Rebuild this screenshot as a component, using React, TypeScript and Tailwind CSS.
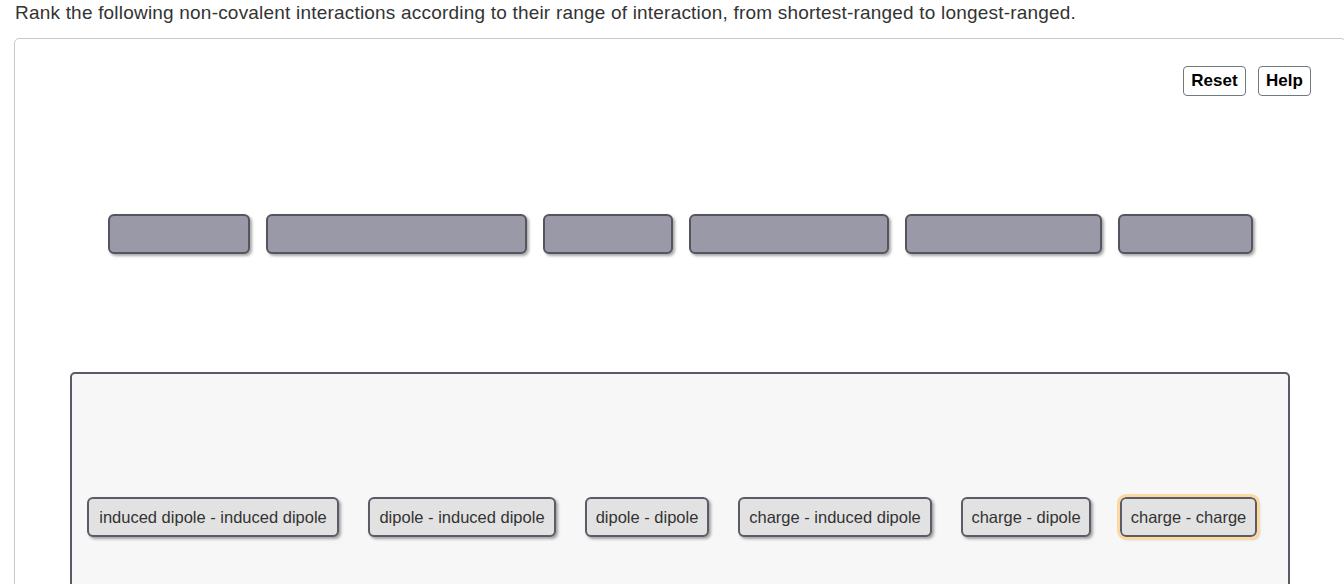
const slots = [142, 261, 130, 200, 197, 135];

const choices = [
  { label: "induced dipole - induced dipole", w: "w-[252px]" },
  { label: "dipole - induced dipole", w: "w-[188px]" },
  { label: "dipole - dipole", w: "w-[124px]" },
  { label: "charge - induced dipole", w: "w-[194px]" },
  { label: "charge - dipole", w: "w-[130px]" },
  { label: "charge - charge", w: "w-[137px]", focused: true },
];

function ToolButton({ label, w }: { label: string; w: string }) {
  return (
    <button
      className={`${w} h-[30px] rounded-[4px] border border-[#6e7a82] bg-white text-[17px] font-bold text-black`}
    >
      {label}
    </button>
  );
}

export default function App() {
  return (
    <div
      className="h-[584px] w-full overflow-hidden bg-white"
      style={{ fontFamily: '"Liberation Sans", Arial, sans-serif' }}
    >
      <p className="pl-[15px] pt-[2px] text-[19px] leading-[22px] tracking-[0.2px] text-[#333]">
        Rank the following non-covalent interactions according to their range of interaction, from shortest-ranged to longest-ranged.
      </p>

      <div className="ml-[14px] mt-[14px] w-[1332px] rounded-[5px] border border-[#c9c9c9] bg-white">
        {/* toolbar */}
        <div className="flex justify-end gap-[12px] pr-[34px] pt-[27px]">
          <ToolButton label="Reset" w="w-[63px]" />
          <ToolButton label="Help" w="w-[53px]" />
        </div>

        {/* ranking targets */}
        <div className="mt-[118px] flex justify-center gap-[16px]">
          {slots.map((w, i) => (
            <div
              key={i}
              className="h-[40px] rounded-[6px] border-2 border-[#55545f] bg-[#9a99a8] shadow-[2px_2px_3px_rgba(0,0,0,0.35)]"
              style={{ width: w }}
            />
          ))}
        </div>

        {/* answer bank */}
        <div className="mx-[55px] mt-[118px] h-[300px] rounded-[5px] border-2 border-[#5b5a66] bg-[#f7f7f7]">
          <div className="flex gap-[29px] pl-[15px] pt-[123px]">
            {choices.map((c) => (
              <div
                key={c.label}
                className={`${c.w} flex h-[40px] items-center justify-center rounded-[6px] border-2 border-[#5c5b67] bg-[#e2e2e2] text-[16.5px] text-[#333] shadow-[2px_2px_3px_rgba(0,0,0,0.35)] ${
                  c.focused ? "outline-[3px] outline-solid outline-[#fcd9a0]" : ""
                }`}
              >
                {c.label}
              </div>
            ))}
          </div>
        </div>
      </div>
    </div>
  );
}
